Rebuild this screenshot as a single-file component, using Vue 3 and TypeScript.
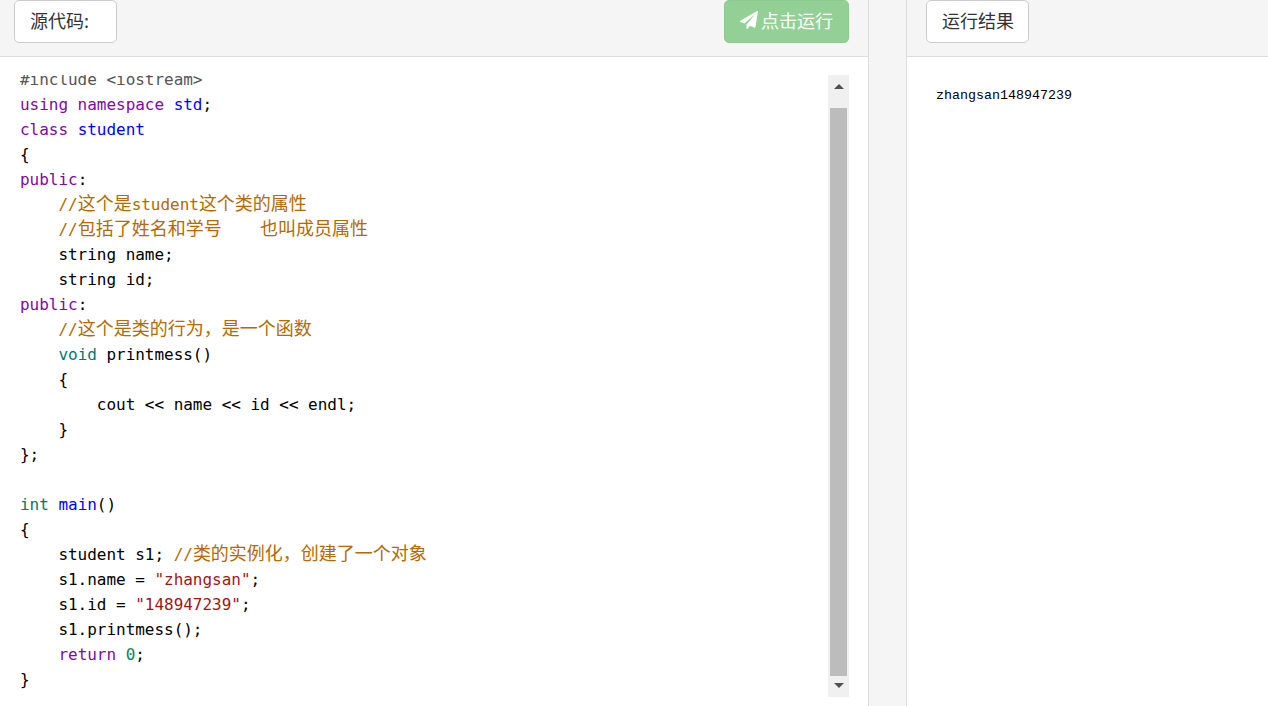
<script setup lang="ts">
type Tok = [string, string]
const lines: Tok[][] = [
  [['gray', '#include <iostream>']],
  [['kw', 'using namespace'], ['', ' '], ['ty', 'std'], ['', ';']],
  [['kw', 'class'], ['', ' '], ['ty', 'student']],
  [['', '{']],
  [['kw', 'public'], ['', ':']],
  [['', '    '], ['cm', '//这个是student这个类的属性']],
  [['', '    '], ['cm', '//包括了姓名和学号    也叫成员属性']],
  [['', '    string name;']],
  [['', '    string id;']],
  [['kw', 'public'], ['', ':']],
  [['', '    '], ['cm', '//这个是类的行为\uFF0C是一个函数']],
  [['', '    '], ['prim', 'void'], ['', ' printmess()']],
  [['', '    {']],
  [['', '        cout << name << id << endl;']],
  [['', '    }']],
  [['', '};']],
  [['', ' ']],
  [['prim', 'int'], ['', ' '], ['ty', 'main'], ['', '()']],
  [['', '{']],
  [['', '    student s1; '], ['cm', '//类的实例化\uFF0C创建了一个对象']],
  [['', '    s1.name = '], ['str', '"zhangsan"'], ['', ';']],
  [['', '    s1.id = '], ['str', '"148947239"'], ['', ';']],
  [['', '    s1.printmess();']],
  [['', '    '], ['kw', 'return'], ['', ' '], ['num', '0'], ['', ';']],
  [['', '}']],
]
// Split a token into Latin and CJK runs, since the CJK runs are set larger.
function runs(text: string): { t: string; zh: boolean }[] {
  return (text.match(/[\u3000-\u9fff\uff00-\uffef]+|[^\u3000-\u9fff\uff00-\uffef]+/g) || []).map((t) => ({
    t,
    zh: /[\u3000-\u9fff\uff00-\uffef]/.test(t),
  }))
}
</script>

<template>
  <div class="page">
    <section class="panel left">
      <header class="head between">
        <span class="btn">源代码:</span>
        <span class="btn run">
          <svg class="plane" viewBox="0 0 1792 1792" width="18" height="18" aria-hidden="true">
            <path fill="#fff" d="M1764 11q33 24 27 64l-256 1536q-5 29-32 45-14 8-31 8-11 0-24-5l-453-185-242 295q-18 23-49 23-13 0-22-4-19-7-30.5-23.5t-11.5-36.5v-349l864-1059-1069 925-395-162q-37-14-40-55-2-40 32-59l1664-960q15-9 32-9 20 0 36 11z" />
          </svg>点击运行
        </span>
      </header>
      <div class="editor">
        <div class="view">
          <div class="code">
            <div v-for="(line, i) in lines" :key="i" class="line">
              <span v-for="(tok, j) in line" :key="j" :class="tok[0]">
                <template v-for="(r, k) in runs(tok[1])" :key="k">
                  <span v-if="r.zh" class="zh">{{ r.t }}</span>
                  <template v-else>{{ r.t }}</template>
                </template>
              </span>
            </div>
          </div>
        </div>
        <div class="bar">
          <i class="arrow up"></i>
          <div class="track"><div class="thumb"></div></div>
          <i class="arrow down"></i>
        </div>
      </div>
    </section>
    <div class="gutter"></div>
    <section class="panel right">
      <header class="head">
        <span class="btn">运行结果</span>
      </header>
      <div class="result">zhangsan148947239</div>
    </section>
  </div>
</template>

<style>
html, body { margin: 0; background: #fff; overflow: hidden; }
</style>

<style scoped>
.page {
  display: flex;
  height: 706px;
  overflow: hidden;
  font-family: "Noto Sans CJK SC", "Liberation Sans", sans-serif;
}
.panel { display: flex; flex-direction: column; min-width: 0; }
.left { width: 868px; flex: none; }
.right { flex: 1; }
.gutter {
  width: 37px;
  flex: none;
  background: #f5f5f5;
  border-left: 1px solid #ddd;
  border-right: 1px solid #ddd;
}
.head {
  height: 57px;
  flex: none;
  box-sizing: border-box;
  background: #f5f5f5;
  border-bottom: 1px solid #ddd;
  display: flex;
  align-items: flex-start;
  padding: 0 19px 0 14px;
}
.right .head { padding-left: 19px; }
.between { justify-content: space-between; }
.btn {
  display: flex;
  align-items: center;
  box-sizing: border-box;
  height: 43px;
  padding: 0 14px 3px 15px;
  background: #fff;
  border: 1px solid #ccc;
  border-radius: 5px;
  color: #333;
  font-size: 18px;
  line-height: 24px;
  min-width: 103px;
  white-space: pre;
}
.run {
  width: 125px;
  color: #fff;
  background: #93d095;
  border-color: #8ccb8c;
}
.plane { margin-right: 3px; flex: none; }
.editor {
  flex: 1;
  display: flex;
  min-height: 0;
  padding: 18px 19px 9px 20px;
  box-sizing: border-box;
}
.view { flex: 1; overflow: hidden; min-width: 0; }
.code {
  margin-top: -8px;
  font-family: "DejaVu Sans Mono", monospace;
  font-size: 16px;
  letter-spacing: -0.03px;
  color: #000;
}
.line { height: 25px; line-height: 25px; white-space: pre; }
.zh {
  font-family: "Noto Sans CJK SC", sans-serif;
  font-size: 18px;
  line-height: 0;
  letter-spacing: 0;
}
.gray { color: #555; }
.kw { color: #7f0a9e; }
.ty { color: #0000ff; }
.cm { color: #b36a00; }
.prim { color: #00796b; }
.str { color: #a31515; }
.num { color: #098658; }
.bar {
  width: 21px;
  flex: none;
  background: #f0f0f0;
  display: flex;
  flex-direction: column;
  align-items: center;
}
.track { flex: 1; width: 100%; display: flex; justify-content: center; }
.thumb { width: 17px; height: 100%; background: #bcbcbc; }
.arrow { display: block; width: 0; height: 0; flex: none; border-left: 5px solid transparent; border-right: 5px solid transparent; }
.up { border-bottom: 5px solid #505050; margin: 9px 0 19px; }
.down { border-top: 5px solid #505050; margin: 7px 0 9px; }
.result {
  padding: 31px 29px;
  font-family: "Liberation Mono", monospace;
  font-size: 13.33px;
  line-height: 16px;
  color: #000;
}
</style>
